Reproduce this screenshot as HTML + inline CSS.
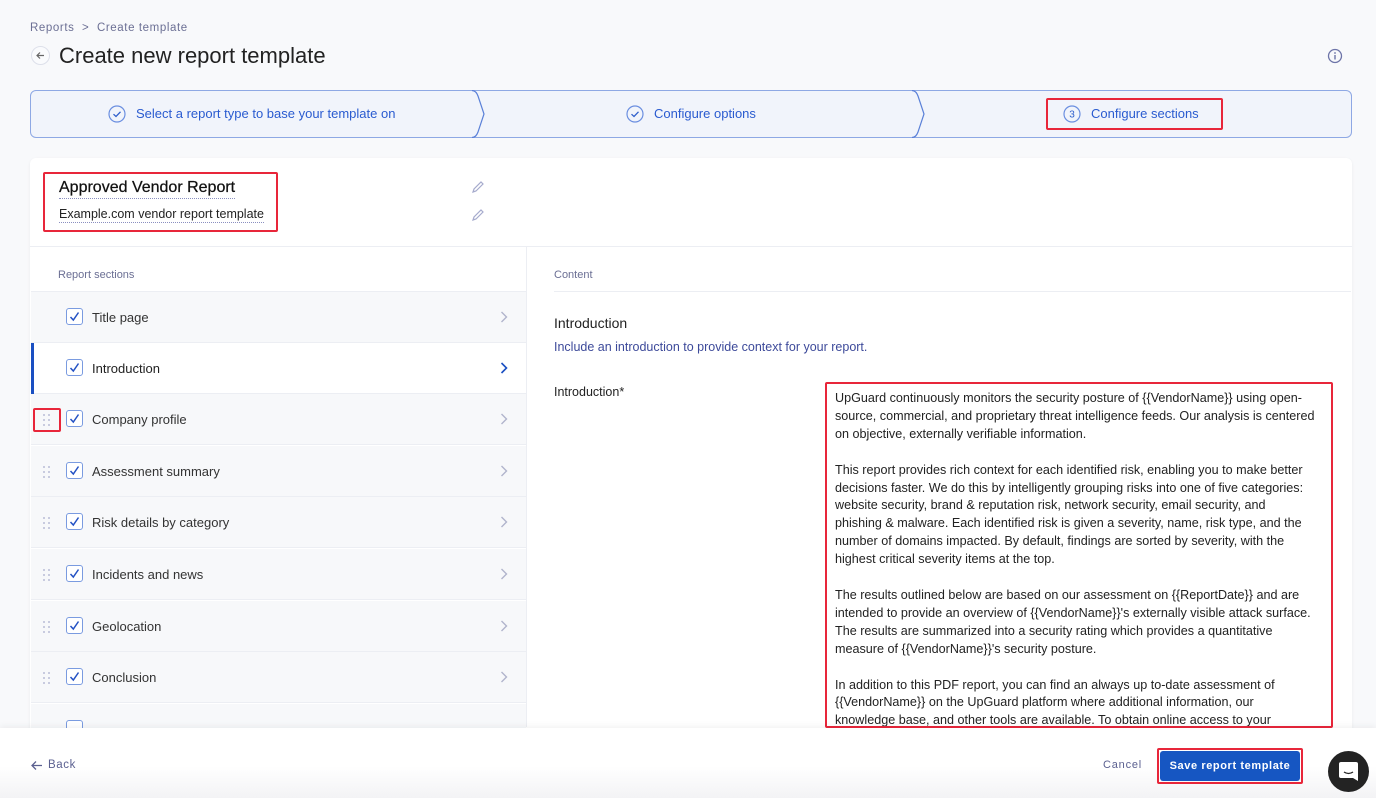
<!DOCTYPE html>
<html><head><meta charset="utf-8"><style>
*{box-sizing:border-box;margin:0;padding:0}
body{width:1376px;height:798px;overflow:hidden;background:#f8f9fb;font-family:"Liberation Sans",sans-serif;color:#222;position:relative}
.abs{position:absolute}
.red{position:absolute;border:2.5px solid #e8263a;border-radius:2px}
.row{position:absolute;left:31px;width:495px;height:51px;background:#f7f8fa;border-bottom:1px solid #eceef3}
.cb{position:absolute;left:35px;top:16px;width:17px;height:17px;border:1.5px solid #7a9be0;border-radius:3px;background:#fff}
.cb svg{position:absolute;left:2px;top:2px}
.row .t{position:absolute;left:61px;top:18px;font-size:13px;color:#333}
.row .chev{position:absolute;right:18px;top:19px}
.drag{position:absolute;left:12px;top:20px;width:8px;height:12px}
.drag i{position:absolute;width:2px;height:2px;border-radius:1px;background:#b9bdd6}
.txt{font-size:12.6px;line-height:17.9px;color:#222;white-space:nowrap}
</style></head><body>
<div class="abs" style="left:30px;top:22px;font-size:11.5px;color:#6b6f94;letter-spacing:.6px">Reports &nbsp;&gt;&nbsp; Create template</div>
<div class="abs" style="left:31px;top:46px;width:19px;height:19px;border-radius:50%;border:1px solid #dde0ea;background:#fafbfd"></div>
<svg class="abs" style="left:35px;top:50px" width="11" height="11"><path d="M9 5.5 H2 M5 2.5 L2 5.5 L5 8.5" fill="none" stroke="#666" stroke-width="1.2"/></svg>
<div class="abs" style="left:59px;top:43px;font-size:22px;color:#222">Create new report template</div>
<svg class="abs" style="left:1327px;top:48px" width="16" height="16" viewBox="0 0 16 16"><circle cx="8" cy="8" r="6.5" fill="none" stroke="#6d74a8" stroke-width="1.3"/><rect x="7.3" y="7" width="1.4" height="4.5" fill="#6d74a8"/><circle cx="8" cy="5" r=".9" fill="#6d74a8"/></svg>

<div class="abs" style="left:30px;top:90px;width:1322px;height:48px;background:#f1f4fb;border:1px solid #8ea8e4;border-radius:6px"></div>
<svg class="abs" style="left:470px;top:90px" width="20" height="48"><path d="M2 0.5 Q6 0.5 8 6 L14 24 L8 42 Q6 47.5 2 47.5" fill="none" stroke="#5a80d8" stroke-width="1.2"/></svg>
<svg class="abs" style="left:910px;top:90px" width="20" height="48"><path d="M2 0.5 Q6 0.5 8 6 L14 24 L8 42 Q6 47.5 2 47.5" fill="none" stroke="#5a80d8" stroke-width="1.2"/></svg>
<svg class="abs" style="left:108px;top:105px" width="18" height="18"><circle cx="9" cy="9" r="8" fill="none" stroke="#6a8ee0" stroke-width="1.2"/><path d="M5.5 9.2 L8 11.5 L12.5 6.8" fill="none" stroke="#2f5fcc" stroke-width="1.3"/></svg>
<div class="abs" style="left:136px;top:106px;font-size:13px;color:#2a5bd0">Select a report type to base your template on</div>
<svg class="abs" style="left:626px;top:105px" width="18" height="18"><circle cx="9" cy="9" r="8" fill="none" stroke="#6a8ee0" stroke-width="1.2"/><path d="M5.5 9.2 L8 11.5 L12.5 6.8" fill="none" stroke="#2f5fcc" stroke-width="1.3"/></svg>
<div class="abs" style="left:654px;top:106px;font-size:13px;color:#2a5bd0">Configure options</div>
<svg class="abs" style="left:1063px;top:105px" width="18" height="18"><circle cx="9" cy="9" r="8" fill="none" stroke="#6a8ee0" stroke-width="1.2"/><text x="9" y="12.5" font-size="10" text-anchor="middle" fill="#2f5fcc" font-family="Liberation Sans">3</text></svg>
<div class="abs" style="left:1091px;top:106px;font-size:13px;color:#2a5bd0">Configure sections</div>
<div class="red" style="left:1046px;top:98px;width:177px;height:32px"></div>

<div class="abs" style="left:30px;top:158px;width:1322px;height:580px;background:#fff;border-radius:6px;box-shadow:0 1px 3px rgba(0,0,0,.06)"></div>
<div class="abs" style="left:30px;top:246px;width:1322px;height:1px;background:#eceef3"></div>
<div class="abs" style="left:59px;top:179px;font-size:16px;color:#111;border-bottom:1px dotted #8a8fc0;padding-bottom:1px;-webkit-text-stroke:.25px #111">Approved Vendor Report</div>
<div class="abs" style="left:59px;top:207px;font-size:12.5px;color:#222;border-bottom:1px dotted #8a8fc0;padding-bottom:1px">Example.com vendor report template</div>
<div class="red" style="left:43px;top:172px;width:235px;height:60px"></div>
<svg class="abs" style="left:471px;top:180px" width="14" height="14"><path d="M2 12 L3 9 L10 2 L12 4 L5 11 Z" fill="none" stroke="#a6abcd" stroke-width="1.2"/></svg>
<svg class="abs" style="left:471px;top:208px" width="14" height="14"><path d="M2 12 L3 9 L10 2 L12 4 L5 11 Z" fill="none" stroke="#a6abcd" stroke-width="1.2"/></svg>

<div class="abs" style="left:526px;top:247px;width:1px;height:480px;background:#eceef3"></div>
<div class="abs" style="left:58px;top:269px;font-size:11px;color:#6b6f94">Report sections</div>
<div class="abs" style="left:554px;top:269px;font-size:11px;color:#6b6f94">Content</div>
<div class="abs" style="left:31px;top:291px;width:495px;height:1px;background:#eceef3"></div>
<div class="abs" style="left:554px;top:291px;width:797px;height:1px;background:#eceef3"></div>

<div class="row" style="top:292px"><div class="cb"><svg width="11" height="11"><path d="M1.5 6 L4.3 9 L9.5 1.5" fill="none" stroke="#2452c4" stroke-width="1.5"/></svg></div><div class="t">Title page</div><svg class="chev" width="8" height="12"><path d="M1.5 1 L6.5 6 L1.5 11" fill="none" stroke="#b0b4cc" stroke-width="1.4"/></svg></div>
<div class="row" style="top:343px;background:#fff"><div class="abs" style="left:0;top:0;width:3px;height:51px;background:#1a4fc2"></div><div class="cb"><svg width="11" height="11"><path d="M1.5 6 L4.3 9 L9.5 1.5" fill="none" stroke="#2452c4" stroke-width="1.5"/></svg></div><div class="t" style="color:#222">Introduction</div><svg class="chev" width="8" height="12"><path d="M1.5 1 L6.5 6 L1.5 11" fill="none" stroke="#1a4fc2" stroke-width="1.6"/></svg></div>
<div class="row" style="top:394px"><div class="drag"><i style="left:0;top:0"></i><i style="left:5px;top:0"></i><i style="left:0;top:5px"></i><i style="left:5px;top:5px"></i><i style="left:0;top:10px"></i><i style="left:5px;top:10px"></i></div><div class="cb"><svg width="11" height="11"><path d="M1.5 6 L4.3 9 L9.5 1.5" fill="none" stroke="#2452c4" stroke-width="1.5"/></svg></div><div class="t">Company profile</div><svg class="chev" width="8" height="12"><path d="M1.5 1 L6.5 6 L1.5 11" fill="none" stroke="#b0b4cc" stroke-width="1.4"/></svg></div>
<div class="red" style="left:33px;top:408px;width:28px;height:24px"></div>
<div class="row" style="top:446px"><div class="drag"><i style="left:0;top:0"></i><i style="left:5px;top:0"></i><i style="left:0;top:5px"></i><i style="left:5px;top:5px"></i><i style="left:0;top:10px"></i><i style="left:5px;top:10px"></i></div><div class="cb"><svg width="11" height="11"><path d="M1.5 6 L4.3 9 L9.5 1.5" fill="none" stroke="#2452c4" stroke-width="1.5"/></svg></div><div class="t">Assessment summary</div><svg class="chev" width="8" height="12"><path d="M1.5 1 L6.5 6 L1.5 11" fill="none" stroke="#b0b4cc" stroke-width="1.4"/></svg></div>
<div class="row" style="top:497px"><div class="drag"><i style="left:0;top:0"></i><i style="left:5px;top:0"></i><i style="left:0;top:5px"></i><i style="left:5px;top:5px"></i><i style="left:0;top:10px"></i><i style="left:5px;top:10px"></i></div><div class="cb"><svg width="11" height="11"><path d="M1.5 6 L4.3 9 L9.5 1.5" fill="none" stroke="#2452c4" stroke-width="1.5"/></svg></div><div class="t">Risk details by category</div><svg class="chev" width="8" height="12"><path d="M1.5 1 L6.5 6 L1.5 11" fill="none" stroke="#b0b4cc" stroke-width="1.4"/></svg></div>
<div class="row" style="top:549px"><div class="drag"><i style="left:0;top:0"></i><i style="left:5px;top:0"></i><i style="left:0;top:5px"></i><i style="left:5px;top:5px"></i><i style="left:0;top:10px"></i><i style="left:5px;top:10px"></i></div><div class="cb"><svg width="11" height="11"><path d="M1.5 6 L4.3 9 L9.5 1.5" fill="none" stroke="#2452c4" stroke-width="1.5"/></svg></div><div class="t">Incidents and news</div><svg class="chev" width="8" height="12"><path d="M1.5 1 L6.5 6 L1.5 11" fill="none" stroke="#b0b4cc" stroke-width="1.4"/></svg></div>
<div class="row" style="top:601px"><div class="drag"><i style="left:0;top:0"></i><i style="left:5px;top:0"></i><i style="left:0;top:5px"></i><i style="left:5px;top:5px"></i><i style="left:0;top:10px"></i><i style="left:5px;top:10px"></i></div><div class="cb"><svg width="11" height="11"><path d="M1.5 6 L4.3 9 L9.5 1.5" fill="none" stroke="#2452c4" stroke-width="1.5"/></svg></div><div class="t">Geolocation</div><svg class="chev" width="8" height="12"><path d="M1.5 1 L6.5 6 L1.5 11" fill="none" stroke="#b0b4cc" stroke-width="1.4"/></svg></div>
<div class="row" style="top:652px"><div class="drag"><i style="left:0;top:0"></i><i style="left:5px;top:0"></i><i style="left:0;top:5px"></i><i style="left:5px;top:5px"></i><i style="left:0;top:10px"></i><i style="left:5px;top:10px"></i></div><div class="cb"><svg width="11" height="11"><path d="M1.5 6 L4.3 9 L9.5 1.5" fill="none" stroke="#2452c4" stroke-width="1.5"/></svg></div><div class="t">Conclusion</div><svg class="chev" width="8" height="12"><path d="M1.5 1 L6.5 6 L1.5 11" fill="none" stroke="#b0b4cc" stroke-width="1.4"/></svg></div>
<div class="row" style="top:704px"><div class="cb"></div></div>

<div class="abs" style="left:554px;top:315px;font-size:14px;color:#222">Introduction</div>
<div class="abs" style="left:554px;top:340px;font-size:12.5px;color:#3d4a9a">Include an introduction to provide context for your report.</div>
<div class="abs" style="left:554px;top:385px;font-size:12.5px;color:#222">Introduction*</div>

<div class="abs" style="left:827px;top:384px;width:504px;height:342px;overflow:hidden"><div class="abs txt" style="left:8px;top:6px">UpGuard continuously monitors the security posture of {{VendorName}} using open-<br>source, commercial, and proprietary threat intelligence feeds. Our analysis is centered<br>on objective, externally verifiable information.<br><br>This report provides rich context for each identified risk, enabling you to make better<br>decisions faster. We do this by intelligently grouping risks into one of five categories:<br>website security, brand &amp; reputation risk, network security, email security, and<br>phishing &amp; malware. Each identified risk is given a severity, name, risk type, and the<br>number of domains impacted. By default, findings are sorted by severity, with the<br>highest critical severity items at the top.<br><br>The results outlined below are based on our assessment on {{ReportDate}} and are<br>intended to provide an overview of {{VendorName}}'s externally visible attack surface.<br>The results are summarized into a security rating which provides a quantitative<br>measure of {{VendorName}}'s security posture.<br><br>In addition to this PDF report, you can find an always up to-date assessment of<br>{{VendorName}} on the UpGuard platform where additional information, our<br>knowledge base, and other tools are available. To obtain online access to your</div></div>
<div class="red" style="left:825px;top:382px;width:508px;height:346px"></div>

<div class="abs" style="left:0;top:728px;width:1376px;height:70px;background:linear-gradient(#fff 55%,#f3f3f5);box-shadow:0 -2px 6px rgba(0,0,0,.05)"></div>
<svg class="abs" style="left:30px;top:760px" width="13" height="11"><path d="M12 5.5 H2 M6 1.5 L2 5.5 L6 9.5" fill="none" stroke="#5b6090" stroke-width="1.3"/></svg>
<div class="abs" style="left:48px;top:759px;font-size:11.5px;color:#5b6090;letter-spacing:.6px">Back</div>
<div class="abs" style="left:1103px;top:759px;font-size:11px;color:#5b6090;letter-spacing:.8px">Cancel</div>
<div class="abs" style="left:1160px;top:751px;width:140px;height:30px;background:#1656c2;border-radius:3px;color:#fff;font-size:11px;font-weight:bold;letter-spacing:.6px;text-align:center;line-height:30px">Save report template</div>
<div class="red" style="left:1157px;top:748px;width:146px;height:36px"></div>
<div class="abs" style="left:1328px;top:751px;width:41px;height:41px;border-radius:50%;background:#232323"></div>
<svg class="abs" style="left:1338px;top:761px" width="21" height="21"><path d="M3 1 H18 Q20 1 20 3 V20 L15 17 H3 Q1 17 1 15 V3 Q1 1 3 1Z" fill="#fff"/><path d="M6 11 Q10.5 14 15 11" fill="none" stroke="#232323" stroke-width="1.3"/></svg>
</body></html>
